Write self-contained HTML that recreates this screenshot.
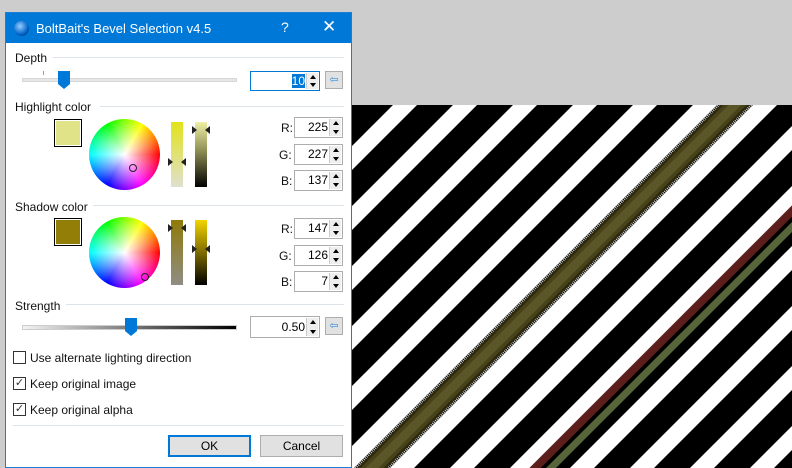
<!DOCTYPE html><html><head><style>
*{margin:0;padding:0;box-sizing:border-box}
body{width:792px;height:468px;background:#cdcdcd;position:relative;overflow:hidden;font-family:"Liberation Sans",sans-serif;font-size:12px;color:#000}
.a{position:absolute}
.dlg{left:5px;top:12px;width:347px;height:456px;background:#fff;border:1px solid #1a7fd4}
.tb{left:0;top:0;width:345px;height:30px;background:#0078d7;color:#fff;font-size:12.5px}
.lbl{font-size:12px;color:#111}
.sep{height:1px;background:#dce3ea}
.num{border:1px solid #adadad;background:#fff;text-align:right;font-size:12px;line-height:18px;padding-right:14px}
.spin{position:absolute;right:1px;top:1px;width:12px;bottom:1px;border-left:1px solid #ccc;background:#eee}
.spin:before{content:"";position:absolute;left:3px;top:2px;border:3px solid transparent;border-bottom:4px solid #000;border-top:0}
.spin:after{content:"";position:absolute;left:3px;bottom:2px;border:3px solid transparent;border-top:4px solid #000;border-bottom:0}
.rst{width:18px;height:18px;border:1px solid #adadad;background:#e1e1e1;color:#3b8fd9;font-size:11px;text-align:center;line-height:16px}
.cb{width:13px;height:13px;border:1px solid #333;background:#fff;font-size:11px;line-height:11px;text-align:center;color:#333}
.btn{height:22px;border:1px solid #adadad;background:#e1e1e1;text-align:center;line-height:20px;font-size:12px}
.wheel{border-radius:50%;background:radial-gradient(circle,#fff 0%,rgba(255,255,255,0) 70%),conic-gradient(from 90deg,#f00,#f0f 60deg,#00f 120deg,#0ff 180deg,#0f0 240deg,#ff0 300deg,#f00)}
.ar{position:absolute;width:0;height:0;border-top:4px solid transparent;border-bottom:4px solid transparent}
</style></head><body>
<svg class="a" style="left:352px;top:105px" width="440" height="363" viewBox="0 0 440 363">
<rect width="440" height="363" fill="#000"/>
<g stroke="#fff" stroke-width="17">
<line x1="-400" y1="453" x2="500" y2="-447"/>
<line x1="-400" y1="513" x2="500" y2="-387"/>
<line x1="-400" y1="573" x2="500" y2="-327"/>
<line x1="-400" y1="633" x2="500" y2="-267"/>
<line x1="-400" y1="693" x2="500" y2="-207"/>
<line x1="-400" y1="753" x2="500" y2="-147"/>
<line x1="-400" y1="813" x2="500" y2="-87"/>
<line x1="-400" y1="873" x2="500" y2="-27"/>
<line x1="-400" y1="933" x2="500" y2="33"/>
<line x1="-400" y1="993" x2="500" y2="93"/>
<line x1="-400" y1="1053" x2="500" y2="153"/>
<line x1="-400" y1="1113" x2="500" y2="213"/>
<line x1="-400" y1="1173" x2="500" y2="273"/>
<line x1="-400" y1="1233" x2="500" y2="333"/>
<line x1="-400" y1="1293" x2="500" y2="393"/>
<line x1="-400" y1="1353" x2="500" y2="453"/>
</g>
<line x1="-400" y1="783" x2="500" y2="-117" stroke="#d8d8d8" stroke-width="25" stroke-dasharray="1 1"/>
<line x1="-400" y1="783" x2="500" y2="-117" stroke="#2e2a0c" stroke-width="21"/>
<line x1="-400" y1="783" x2="500" y2="-117" stroke="#47421a" stroke-width="16"/>
<line x1="-400" y1="783" x2="500" y2="-117" stroke="#5b5628" stroke-width="9"/>
<line x1="-400" y1="946" x2="500" y2="46" stroke="#5c1e1a" stroke-width="8"/>
<line x1="-400" y1="962" x2="500" y2="62" stroke="#56653a" stroke-width="7"/>
</svg>
<div class="a dlg">
<div class="a tb"><div class="a" style="left:8px;top:8px;width:15px;height:15px;border-radius:50%;background:radial-gradient(circle at 40% 35%,#9cf,#06c 60%,#013)"></div>
<div class="a" style="left:30px;top:8px;font-size:13px">BoltBait's Bevel Selection v4.5</div>
<div class="a" style="left:275px;top:6px;font-size:14px">?</div>
<div class="a" style="left:316px;top:4px;font-size:17px">✕</div></div>
</div>
<div class="a lbl" style="left:15px;top:51px">Depth</div>
<div class="a sep" style="left:53px;top:57px;width:291px"></div>
<div class="a" style="left:22px;top:78px;width:215px;height:4px;background:#e7e7e7;border:1px solid #d6d6d6"></div>
<div class="a" style="left:43px;top:71px;width:1px;height:4px;background:#999"></div>
<div class="a" style="left:58px;top:71px;width:12px;height:13px;background:#0078d7"></div>
<div class="a" style="left:58px;top:84px;border-left:6px solid transparent;border-right:6px solid transparent;border-top:5px solid #0078d7"></div>
<div class="a num" style="left:250px;top:71px;width:70px;height:20px;border-color:#0078d7"><span style="background:#0078d7;color:#fff">10</span><div class="spin"></div></div>
<div class="a rst" style="left:325px;top:71px">⇦</div>
<div class="a lbl" style="left:15px;top:100px">Highlight color</div>
<div class="a sep" style="left:100px;top:106px;width:244px"></div>
<div class="a" style="left:54px;top:119px;width:28px;height:28px;border:1px solid #000;background:#e1e389;box-shadow:inset 0 0 0 1px #fff"></div>
<div class="a wheel" style="left:89px;top:119px;width:71px;height:71px"></div>
<div class="a" style="left:129px;top:164px;width:8px;height:8px;border:1px solid #222;border-radius:50%"></div>
<div class="a" style="left:171px;top:122px;width:12px;height:65px;background:linear-gradient(#e1e31a,#e0e0d0)"></div>
<div class="a" style="left:195px;top:122px;width:12px;height:65px;background:linear-gradient(#eff0a5,#8c8d52 45%,#000)"></div>
<div class="ar" style="left:168px;top:158px;border-left:5px solid #222"></div><div class="ar" style="left:181px;top:158px;border-right:5px solid #222"></div>
<div class="ar" style="left:192px;top:126px;border-left:5px solid #222"></div><div class="ar" style="left:205px;top:126px;border-right:5px solid #222"></div>
<div class="a lbl" style="left:281px;top:121px">R:</div><div class="a num" style="left:294px;top:117px;width:49px;height:21px">225<div class="spin"></div></div>
<div class="a lbl" style="left:279px;top:148px">G:</div><div class="a num" style="left:294px;top:144px;width:49px;height:21px">227<div class="spin"></div></div>
<div class="a lbl" style="left:281px;top:174px">B:</div><div class="a num" style="left:294px;top:170px;width:49px;height:21px">137<div class="spin"></div></div>
<div class="a lbl" style="left:15px;top:200px">Shadow color</div>
<div class="a sep" style="left:93px;top:205px;width:251px"></div>
<div class="a" style="left:54px;top:218px;width:28px;height:28px;border:1px solid #000;background:#937e07;box-shadow:inset 0 0 0 1px #fff"></div>
<div class="a wheel" style="left:89px;top:217px;width:71px;height:71px"></div>
<div class="a" style="left:141px;top:273px;width:8px;height:8px;border:1px solid #222;border-radius:50%"></div>
<div class="a" style="left:171px;top:220px;width:12px;height:65px;background:linear-gradient(#8f7a07,#8f8d85)"></div>
<div class="a" style="left:195px;top:220px;width:12px;height:65px;background:linear-gradient(#f2d400,#8a7600 45%,#000)"></div>
<div class="ar" style="left:168px;top:224px;border-left:5px solid #222"></div><div class="ar" style="left:181px;top:224px;border-right:5px solid #222"></div>
<div class="ar" style="left:192px;top:245px;border-left:5px solid #222"></div><div class="ar" style="left:205px;top:245px;border-right:5px solid #222"></div>
<div class="a lbl" style="left:281px;top:222px">R:</div><div class="a num" style="left:294px;top:218px;width:49px;height:21px">147<div class="spin"></div></div>
<div class="a lbl" style="left:279px;top:249px">G:</div><div class="a num" style="left:294px;top:245px;width:49px;height:21px">126<div class="spin"></div></div>
<div class="a lbl" style="left:281px;top:275px">B:</div><div class="a num" style="left:294px;top:271px;width:49px;height:21px">7<div class="spin"></div></div>
<div class="a lbl" style="left:15px;top:299px">Strength</div>
<div class="a sep" style="left:66px;top:304px;width:278px"></div>
<div class="a" style="left:22px;top:325px;width:215px;height:5px;background:linear-gradient(90deg,#f4f4f4,#000);border:1px solid #ccc"></div>
<div class="a" style="left:125px;top:318px;width:12px;height:13px;background:#0078d7"></div>
<div class="a" style="left:125px;top:331px;border-left:6px solid transparent;border-right:6px solid transparent;border-top:5px solid #0078d7"></div>
<div class="a num" style="left:250px;top:316px;width:70px;height:22px;line-height:20px">0.50<div class="spin"></div></div>
<div class="a rst" style="left:325px;top:317px">⇦</div>
<div class="a cb" style="left:13px;top:351px"></div><div class="a lbl" style="left:30px;top:351px">Use alternate lighting direction</div>
<div class="a cb" style="left:13px;top:377px">✓</div><div class="a lbl" style="left:30px;top:377px">Keep original image</div>
<div class="a cb" style="left:13px;top:403px">✓</div><div class="a lbl" style="left:30px;top:403px">Keep original alpha</div>
<div class="a sep" style="left:13px;top:425px;width:331px"></div>
<div class="a btn" style="left:168px;top:435px;width:83px;border:2px solid #0078d7;line-height:18px">OK</div>
<div class="a btn" style="left:260px;top:435px;width:83px">Cancel</div>
</body></html>
